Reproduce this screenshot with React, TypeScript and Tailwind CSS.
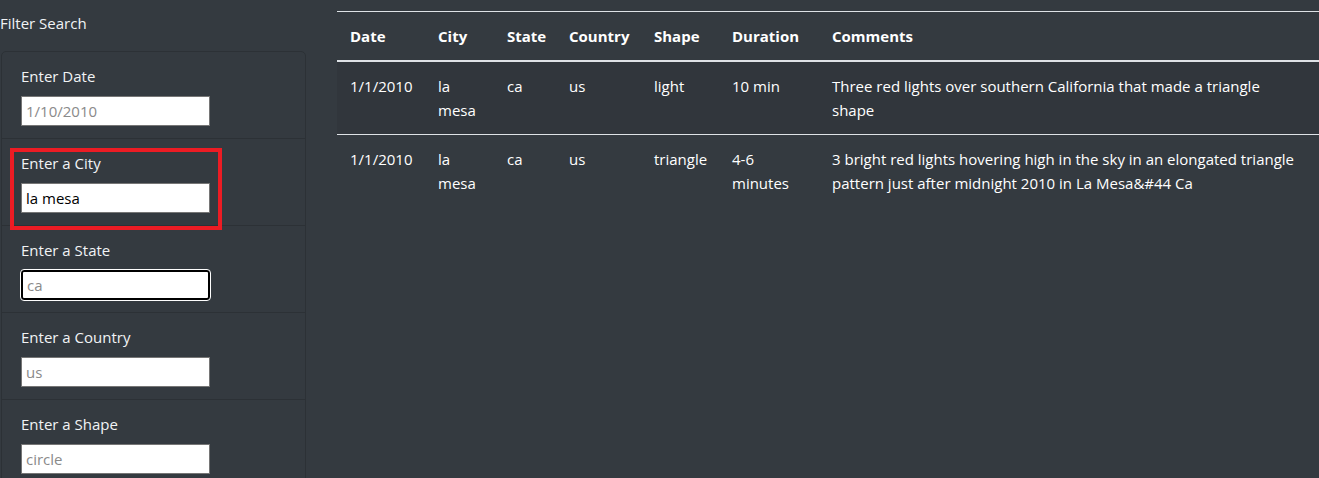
const filters = [
  { label: "Enter Date", value: "", placeholder: "1/10/2010" },
  { label: "Enter a City", value: "la mesa", placeholder: "" },
  { label: "Enter a State", value: "", placeholder: "ca", focused: true },
  { label: "Enter a Country", value: "", placeholder: "us" },
  { label: "Enter a Shape", value: "", placeholder: "circle" },
];

const columns = [
  { name: "Date", w: "w-[88px]" },
  { name: "City", w: "w-[69px]" },
  { name: "State", w: "w-[62px]" },
  { name: "Country", w: "w-[85px]" },
  { name: "Shape", w: "w-[78px]" },
  { name: "Duration", w: "w-[100px]" },
  { name: "Comments", w: "w-[500px]" },
];

const rows = [
  {
    striped: true,
    cells: [
      ["1/1/2010"],
      ["la", "mesa"],
      ["ca"],
      ["us"],
      ["light"],
      ["10 min"],
      ["Three red lights over southern California that made a triangle", "shape"],
    ],
  },
  {
    striped: false,
    cells: [
      ["1/1/2010"],
      ["la", "mesa"],
      ["ca"],
      ["us"],
      ["triangle"],
      ["4-6", "minutes"],
      [
        "3 bright red lights hovering high in the sky in an elongated triangle",
        "pattern just after midnight 2010 in La Mesa&#44 Ca",
      ],
    ],
  },
];

export default function App() {
  return (
    <div
      className="w-[1319px] h-[478px] overflow-hidden bg-[#343a40] text-white flex"
      style={{ fontFamily: '"Open Sans", "Noto Sans", sans-serif' }}
    >
      {/* Sidebar filters */}
      <aside className="relative w-[306px] shrink-0 pt-[11px]">
        <h5 className="text-[15px] leading-6 text-[#f1f3f5]">Filter Search</h5>
        <div className="mt-4 ml-px w-[305px] rounded-[5px] border border-[#2c3136]">
          {filters.map((f, i) => (
            <div
              key={f.label}
              className={`px-[19px] pt-3 pb-3 ${i > 0 ? "border-t border-[#2c3136]" : ""}`}
            >
              <label className="block text-[15px] leading-6 text-[#f1f3f5] mb-2">
                {f.label}
              </label>
              <input
                type="text"
                readOnly
                defaultValue={f.value}
                placeholder={f.placeholder}
                className={`block w-[189px] h-[30px] bg-white px-1 text-[15px] text-black placeholder:text-[#8a8a8a] ${
                  f.focused
                    ? "border-2 border-black rounded-[3px] outline outline-1 outline-white"
                    : "border border-[#767676]"
                }`}
              />
            </div>
          ))}
        </div>
        {/* red annotation box */}
        <div className="absolute left-[10px] top-[148px] w-[212px] h-[82px] border-4 border-[#ec1c24] pointer-events-none" />
      </aside>

      {/* Results table */}
      <main className="ml-[31px] flex-1 pt-[11px]">
        <table className="table-fixed w-[982px] border-collapse text-[15px] leading-6">
          <thead>
            <tr className="border-t border-[#dee2e6] border-b-2">
              {columns.map((c) => (
                <th key={c.name} className={`${c.w} px-[13px] py-3 text-left font-bold`}>
                  {c.name}
                </th>
              ))}
            </tr>
          </thead>
          <tbody>
            {rows.map((r, ri) => (
              <tr key={ri} className={`border-t border-[#dee2e6] ${r.striped ? "bg-[#31363c]" : ""}`}>
                {r.cells.map((lines, ci) => (
                  <td key={ci} className="px-[13px] py-3 align-top whitespace-nowrap">
                    {lines.map((l, li) => (
                      <span key={li} className="block">
                        {l}
                      </span>
                    ))}
                  </td>
                ))}
              </tr>
            ))}
          </tbody>
        </table>
      </main>
    </div>
  );
}
